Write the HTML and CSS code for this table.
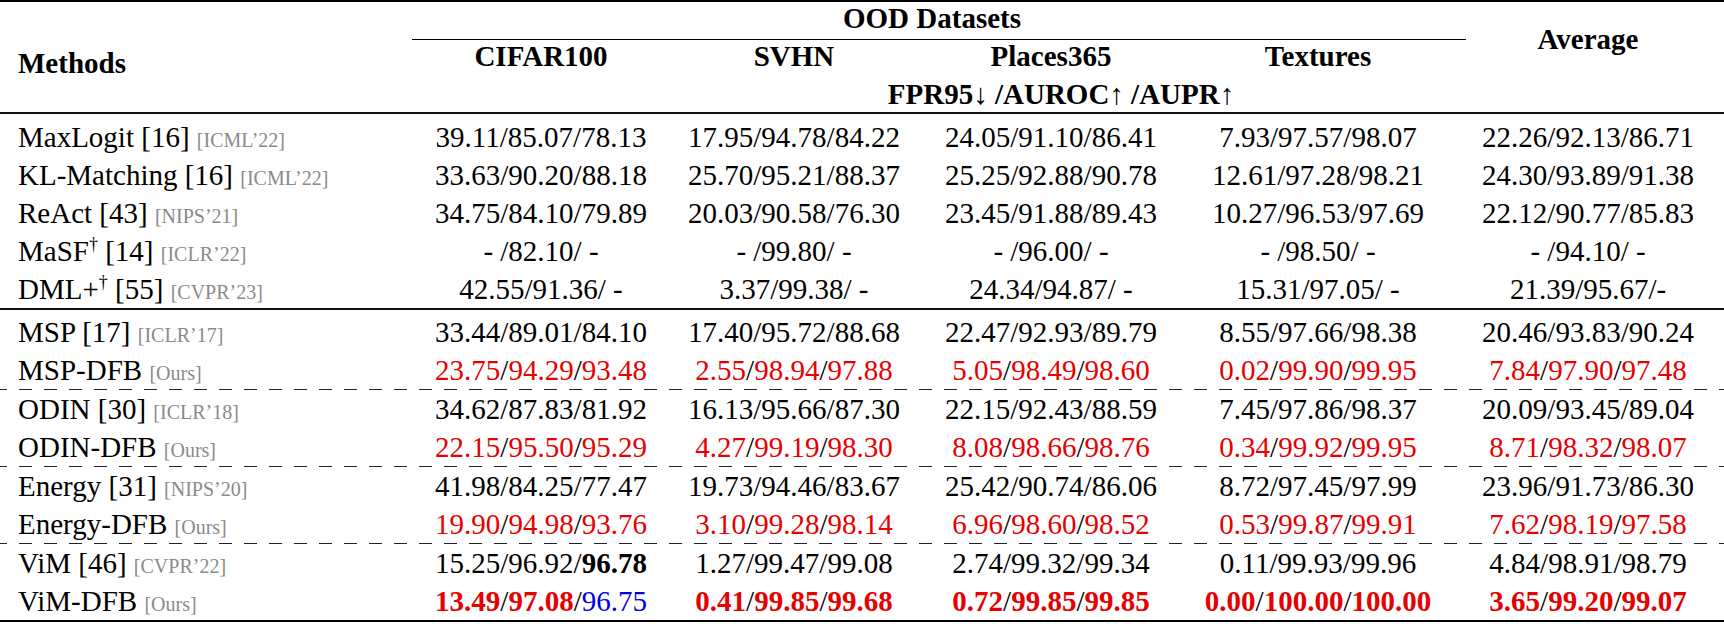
FILE: index.html
```html
<!DOCTYPE html>
<html>
<head>
<meta charset="utf-8">
<link rel="stylesheet" href="styles.css">
</head>
<body>
<table class="results">
  <colgroup>
    <col class="c-method"><col class="c-cifar"><col class="c-svhn"><col class="c-places"><col class="c-tex"><col class="c-avg">
  </colgroup>
  <thead>
    <tr class="h1">
      <th rowspan="3" class="methods">Methods</th>
      <th colspan="4" class="ood">OOD Datasets</th>
      <th rowspan="2" class="avg">Average</th>
    </tr>
    <tr class="h2">
      <th>CIFAR100</th><th>SVHN</th><th>Places365</th><th>Textures</th>
    </tr>
    <tr class="h3">
      <th></th>
      <th colspan="3" class="metric">FPR95<span class="arr">↓</span> /AUROC<span class="arr">↑</span> /AUPR<span class="arr">↑</span></th>
      <th></th>
    </tr>
  </thead>
  <tbody>
    <tr class="first">
      <td class="m">MaxLogit [16] <span class="venue">[ICML’22]</span></td>
      <td>39.11/85.07/78.13</td><td>17.95/94.78/84.22</td><td>24.05/91.10/86.41</td><td>7.93/97.57/98.07</td><td>22.26/92.13/86.71</td>
    </tr>
    <tr>
      <td class="m">KL-Matching [16] <span class="venue">[ICML’22]</span></td>
      <td>33.63/90.20/88.18</td><td>25.70/95.21/88.37</td><td>25.25/92.88/90.78</td><td>12.61/97.28/98.21</td><td>24.30/93.89/91.38</td>
    </tr>
    <tr>
      <td class="m">ReAct [43] <span class="venue">[NIPS’21]</span></td>
      <td>34.75/84.10/79.89</td><td>20.03/90.58/76.30</td><td>23.45/91.88/89.43</td><td>10.27/96.53/97.69</td><td>22.12/90.77/85.83</td>
    </tr>
    <tr>
      <td class="m">MaSF<sup>†</sup> [14] <span class="venue">[ICLR’22]</span></td>
      <td>- /82.10/ -</td><td>- /99.80/ -</td><td>- /96.00/ -</td><td>- /98.50/ -</td><td>- /94.10/ -</td>
    </tr>
    <tr>
      <td class="m">DML+<sup>†</sup> [55] <span class="venue">[CVPR’23]</span></td>
      <td>42.55/91.36/ -</td><td>3.37/99.38/ -</td><td>24.34/94.87/ -</td><td>15.31/97.05/ -</td><td>21.39/95.67/-</td>
    </tr>
    <tr class="mid">
      <td class="m">MSP [17] <span class="venue">[ICLR’17]</span></td>
      <td>33.44/89.01/84.10</td><td>17.40/95.72/88.68</td><td>22.47/92.93/89.79</td><td>8.55/97.66/98.38</td><td>20.46/93.83/90.24</td>
    </tr>
    <tr>
      <td class="m">MSP-DFB <span class="venue">[Ours]</span></td>
      <td><span class="r">23.75</span>/<span class="r">94.29</span>/<span class="r">93.48</span></td>
      <td><span class="r">2.55</span>/<span class="r">98.94</span>/<span class="r">97.88</span></td>
      <td><span class="r">5.05</span>/<span class="r">98.49</span>/<span class="r">98.60</span></td>
      <td><span class="r">0.02</span>/<span class="r">99.90</span>/<span class="r">99.95</span></td>
      <td><span class="r">7.84</span>/<span class="r">97.90</span>/<span class="r">97.48</span></td>
    </tr>
    <tr class="dash"><td colspan="6"></td></tr>
    <tr>
      <td class="m">ODIN [30] <span class="venue">[ICLR’18]</span></td>
      <td>34.62/87.83/81.92</td><td>16.13/95.66/87.30</td><td>22.15/92.43/88.59</td><td>7.45/97.86/98.37</td><td>20.09/93.45/89.04</td>
    </tr>
    <tr>
      <td class="m">ODIN-DFB <span class="venue">[Ours]</span></td>
      <td><span class="r">22.15</span>/<span class="r">95.50</span>/<span class="r">95.29</span></td>
      <td><span class="r">4.27</span>/<span class="r">99.19</span>/<span class="r">98.30</span></td>
      <td><span class="r">8.08</span>/<span class="r">98.66</span>/<span class="r">98.76</span></td>
      <td><span class="r">0.34</span>/<span class="r">99.92</span>/<span class="r">99.95</span></td>
      <td><span class="r">8.71</span>/<span class="r">98.32</span>/<span class="r">98.07</span></td>
    </tr>
    <tr class="dash"><td colspan="6"></td></tr>
    <tr>
      <td class="m">Energy [31] <span class="venue">[NIPS’20]</span></td>
      <td>41.98/84.25/77.47</td><td>19.73/94.46/83.67</td><td>25.42/90.74/86.06</td><td>8.72/97.45/97.99</td><td>23.96/91.73/86.30</td>
    </tr>
    <tr>
      <td class="m">Energy-DFB <span class="venue">[Ours]</span></td>
      <td><span class="r">19.90</span>/<span class="r">94.98</span>/<span class="r">93.76</span></td>
      <td><span class="r">3.10</span>/<span class="r">99.28</span>/<span class="r">98.14</span></td>
      <td><span class="r">6.96</span>/<span class="r">98.60</span>/<span class="r">98.52</span></td>
      <td><span class="r">0.53</span>/<span class="r">99.87</span>/<span class="r">99.91</span></td>
      <td><span class="r">7.62</span>/<span class="r">98.19</span>/<span class="r">97.58</span></td>
    </tr>
    <tr class="dash"><td colspan="6"></td></tr>
    <tr>
      <td class="m">ViM [46] <span class="venue">[CVPR’22]</span></td>
      <td>15.25/96.92/<b>96.78</b></td><td>1.27/99.47/99.08</td><td>2.74/99.32/99.34</td><td>0.11/99.93/99.96</td><td>4.84/98.91/98.79</td>
    </tr>
    <tr>
      <td class="m">ViM-DFB <span class="venue">[Ours]</span></td>
      <td><b class="r">13.49</b>/<b class="r">97.08</b>/<span class="bl">96.75</span></td>
      <td><b class="r">0.41</b>/<b class="r">99.85</b>/<b class="r">99.68</b></td>
      <td><b class="r">0.72</b>/<b class="r">99.85</b>/<b class="r">99.85</b></td>
      <td><b class="r">0.00</b>/<b class="r">100.00</b>/<b class="r">100.00</b></td>
      <td><b class="r">3.65</b>/<b class="r">99.20</b>/<b class="r">99.07</b></td>
    </tr>
  </tbody>
</table>
</body>
</html>
```
FILE: styles.css
```css
html, body {
  margin: 0;
  padding: 0;
  background: #fff;
}

.results {
  width: 1724px;
  table-layout: fixed;
  border-collapse: separate;
  border-spacing: 0;
  border-top: 2px solid #000;
  border-bottom: 2px solid #000;
  font-family: "Liberation Serif", "DejaVu Serif", serif;
  font-size: 29px;
  color: #000;
}

.c-method { width: 412px; }
.c-cifar { width: 258px; }
.c-svhn { width: 248px; }
.c-places { width: 266px; }
.c-tex { width: 268px; }
.c-avg { width: 272px; }

.results th,
.results td {
  padding: 0;
  height: 38px;
  line-height: 30px;
  text-align: center;
  vertical-align: middle;
  white-space: nowrap;
}

.results th {
  font-weight: bold;
}

.results th.methods {
  text-align: left;
  padding-left: 18px;
  padding-top: 12px;
  height: auto;
  border-bottom: 2px solid #111;
}

.results th.ood {
  position: relative;
  height: 32px;
  padding-bottom: 6px;
}

.results th.ood::after {
  content: "";
  position: absolute;
  left: 0;
  right: -14px;
  bottom: 0;
  height: 1px;
  background: #000;
}

.results tr.h2 th {
  height: 32px;
  padding-bottom: 4px;
}

.results th.avg {
  height: auto;
}

.results tr.h3 th {
  height: 36px;
  border-bottom: 2px solid #111;
}

.arr {
  font-weight: normal;
}

.results td.m {
  text-align: left;
  padding-left: 18px;
}

.venue {
  font-size: 20px;
  line-height: 1;
  color: #8a8a8a;
}

sup {
  font-size: 18px;
  line-height: 0;
  vertical-align: 11px;
}

.results tr.first td {
  padding-top: 4px;
}

.results tr.mid td {
  border-top: 2px solid #111;
  padding-top: 3px;
}

.results tr.dash td {
  height: 1px;
  line-height: 1px;
  padding: 0;
  background: linear-gradient(to right, #222 13px, transparent 13px) -6px 0 / 25px 100% repeat-x;
}

.r { color: #e60000; }
.bl { color: #0000e6; }
b { font-weight: bold; }
```
